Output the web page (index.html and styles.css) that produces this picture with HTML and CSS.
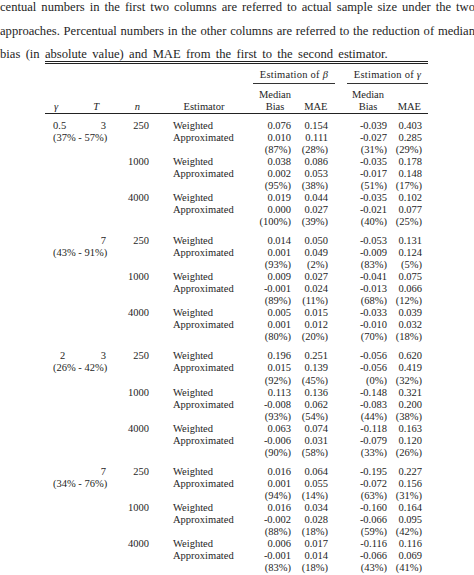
FILE: index.html
```html
<!DOCTYPE html>
<html>
<head>
<meta charset="utf-8">
<link rel="stylesheet" href="styles.css">
</head>
<body>
<div class="caption">
  <div class="line just">centual numbers in the first two columns are referred to actual sample size under the two</div>
  <div class="line just">approaches. Percentual numbers in the other columns are referred to the reduction of median</div>
  <div class="line last">bias (in absolute value) and MAE from the first to the second estimator.</div>
</div>

<div class="table">
  <div class="hrow1">
    <div class="span56"><span>Estimation of <i>β</i></span></div>
    <div class="span78"><span>Estimation of <i>γ</i></span></div>
  </div>
  <div class="hrow2">
    <div class="c1 hg"><i>γ</i></div>
    <div class="c2 ht"><i>T</i></div>
    <div class="c3 hn"><i>n</i></div>
    <div class="c4 he">Estimator</div>
    <div class="c5 hv5"><span class="stack">Median<br>Bias</span></div>
    <div class="c6 hv6">MAE</div>
    <div class="c7 hv7"><span class="stack">Median<br>Bias</span></div>
    <div class="c8 hv8">MAE</div>
  </div>

  <div class="tbody">
    <div class="group">
      <div class="row"><div class="c1 g">0.5</div><div class="c2 t">3</div><div class="c3 n">250</div><div class="c4 e">Weighted</div><div class="c5 v">0.076</div><div class="c6 v">0.154</div><div class="c7 v">-0.039</div><div class="c8 v">0.403</div></div>
      <div class="row"><div class="c12 g">(37% - 57%)</div><div class="c4 e">Approximated</div><div class="c5 v">0.010</div><div class="c6 v">0.111</div><div class="c7 v">-0.027</div><div class="c8 v">0.285</div></div>
      <div class="row"><div class="c5 v">(87%)</div><div class="c6 v">(28%)</div><div class="c7 v">(31%)</div><div class="c8 v">(29%)</div></div>
      <div class="row"><div class="c3 n">1000</div><div class="c4 e">Weighted</div><div class="c5 v">0.038</div><div class="c6 v">0.086</div><div class="c7 v">-0.035</div><div class="c8 v">0.178</div></div>
      <div class="row"><div class="c4 e">Approximated</div><div class="c5 v">0.002</div><div class="c6 v">0.053</div><div class="c7 v">-0.017</div><div class="c8 v">0.148</div></div>
      <div class="row"><div class="c5 v">(95%)</div><div class="c6 v">(38%)</div><div class="c7 v">(51%)</div><div class="c8 v">(17%)</div></div>
      <div class="row"><div class="c3 n">4000</div><div class="c4 e">Weighted</div><div class="c5 v">0.019</div><div class="c6 v">0.044</div><div class="c7 v">-0.035</div><div class="c8 v">0.102</div></div>
      <div class="row"><div class="c4 e">Approximated</div><div class="c5 v">0.000</div><div class="c6 v">0.027</div><div class="c7 v">-0.021</div><div class="c8 v">0.077</div></div>
      <div class="row"><div class="c5 v">(100%)</div><div class="c6 v">(39%)</div><div class="c7 v">(40%)</div><div class="c8 v">(25%)</div></div>
    </div>

    <div class="group">
      <div class="row"><div class="c2 t">7</div><div class="c3 n">250</div><div class="c4 e">Weighted</div><div class="c5 v">0.014</div><div class="c6 v">0.050</div><div class="c7 v">-0.053</div><div class="c8 v">0.131</div></div>
      <div class="row"><div class="c12 g">(43% - 91%)</div><div class="c4 e">Approximated</div><div class="c5 v">0.001</div><div class="c6 v">0.049</div><div class="c7 v">-0.009</div><div class="c8 v">0.124</div></div>
      <div class="row"><div class="c5 v">(93%)</div><div class="c6 v">(2%)</div><div class="c7 v">(83%)</div><div class="c8 v">(5%)</div></div>
      <div class="row"><div class="c3 n">1000</div><div class="c4 e">Weighted</div><div class="c5 v">0.009</div><div class="c6 v">0.027</div><div class="c7 v">-0.041</div><div class="c8 v">0.075</div></div>
      <div class="row"><div class="c4 e">Approximated</div><div class="c5 v">-0.001</div><div class="c6 v">0.024</div><div class="c7 v">-0.013</div><div class="c8 v">0.066</div></div>
      <div class="row"><div class="c5 v">(89%)</div><div class="c6 v">(11%)</div><div class="c7 v">(68%)</div><div class="c8 v">(12%)</div></div>
      <div class="row"><div class="c3 n">4000</div><div class="c4 e">Weighted</div><div class="c5 v">0.005</div><div class="c6 v">0.015</div><div class="c7 v">-0.033</div><div class="c8 v">0.039</div></div>
      <div class="row"><div class="c4 e">Approximated</div><div class="c5 v">0.001</div><div class="c6 v">0.012</div><div class="c7 v">-0.010</div><div class="c8 v">0.032</div></div>
      <div class="row"><div class="c5 v">(80%)</div><div class="c6 v">(20%)</div><div class="c7 v">(70%)</div><div class="c8 v">(18%)</div></div>
    </div>

    <div class="group">
      <div class="row"><div class="c1 g g2">2</div><div class="c2 t">3</div><div class="c3 n">250</div><div class="c4 e">Weighted</div><div class="c5 v">0.196</div><div class="c6 v">0.251</div><div class="c7 v">-0.056</div><div class="c8 v">0.620</div></div>
      <div class="row"><div class="c12 g">(26% - 42%)</div><div class="c4 e">Approximated</div><div class="c5 v">0.015</div><div class="c6 v">0.139</div><div class="c7 v">-0.056</div><div class="c8 v">0.419</div></div>
      <div class="row"><div class="c5 v">(92%)</div><div class="c6 v">(45%)</div><div class="c7 v">(0%)</div><div class="c8 v">(32%)</div></div>
      <div class="row"><div class="c3 n">1000</div><div class="c4 e">Weighted</div><div class="c5 v">0.113</div><div class="c6 v">0.136</div><div class="c7 v">-0.148</div><div class="c8 v">0.321</div></div>
      <div class="row"><div class="c4 e">Approximated</div><div class="c5 v">-0.008</div><div class="c6 v">0.062</div><div class="c7 v">-0.083</div><div class="c8 v">0.200</div></div>
      <div class="row"><div class="c5 v">(93%)</div><div class="c6 v">(54%)</div><div class="c7 v">(44%)</div><div class="c8 v">(38%)</div></div>
      <div class="row"><div class="c3 n">4000</div><div class="c4 e">Weighted</div><div class="c5 v">0.063</div><div class="c6 v">0.074</div><div class="c7 v">-0.118</div><div class="c8 v">0.163</div></div>
      <div class="row"><div class="c4 e">Approximated</div><div class="c5 v">-0.006</div><div class="c6 v">0.031</div><div class="c7 v">-0.079</div><div class="c8 v">0.120</div></div>
      <div class="row"><div class="c5 v">(90%)</div><div class="c6 v">(58%)</div><div class="c7 v">(33%)</div><div class="c8 v">(26%)</div></div>
    </div>

    <div class="group">
      <div class="row"><div class="c2 t">7</div><div class="c3 n">250</div><div class="c4 e">Weighted</div><div class="c5 v">0.016</div><div class="c6 v">0.064</div><div class="c7 v">-0.195</div><div class="c8 v">0.227</div></div>
      <div class="row"><div class="c12 g">(34% - 76%)</div><div class="c4 e">Approximated</div><div class="c5 v">0.001</div><div class="c6 v">0.055</div><div class="c7 v">-0.072</div><div class="c8 v">0.156</div></div>
      <div class="row"><div class="c5 v">(94%)</div><div class="c6 v">(14%)</div><div class="c7 v">(63%)</div><div class="c8 v">(31%)</div></div>
      <div class="row"><div class="c3 n">1000</div><div class="c4 e">Weighted</div><div class="c5 v">0.016</div><div class="c6 v">0.034</div><div class="c7 v">-0.160</div><div class="c8 v">0.164</div></div>
      <div class="row"><div class="c4 e">Approximated</div><div class="c5 v">-0.002</div><div class="c6 v">0.028</div><div class="c7 v">-0.066</div><div class="c8 v">0.095</div></div>
      <div class="row"><div class="c5 v">(88%)</div><div class="c6 v">(18%)</div><div class="c7 v">(59%)</div><div class="c8 v">(42%)</div></div>
      <div class="row"><div class="c3 n">4000</div><div class="c4 e">Weighted</div><div class="c5 v">0.006</div><div class="c6 v">0.017</div><div class="c7 v">-0.116</div><div class="c8 v">0.116</div></div>
      <div class="row"><div class="c4 e">Approximated</div><div class="c5 v">-0.001</div><div class="c6 v">0.014</div><div class="c7 v">-0.066</div><div class="c8 v">0.069</div></div>
      <div class="row"><div class="c5 v">(83%)</div><div class="c6 v">(18%)</div><div class="c7 v">(43%)</div><div class="c8 v">(41%)</div></div>
    </div>
  </div>
</div>
</body>
</html>
```

FILE: styles.css
```css
html, body {
  margin: 0;
  padding: 0;
  background: #ffffff;
  overflow: hidden;
}

body {
  font-family: "Liberation Serif", "Times New Roman", serif;
  color: #1e1e1e;
}

.caption {
  margin-top: -4.2px;
  width: 475px;
  font-size: 12.6px;
  line-height: 23.7px;
}

.line.just {
  text-align: justify;
  text-align-last: justify;
  word-spacing: -1.5px;
}

.line.last {
  white-space: nowrap;
  word-spacing: 2.2px;
}

.table {
  margin-top: -5.6px;
  margin-left: 45px;
  width: 383px;
  border-top: 3px double #222;
  padding-top: 4.5px;
  font-size: 10.5px;
  line-height: 12.05px;
}

.hrow1,
.hrow2,
.row {
  display: grid;
  grid-template-columns: 30px 37px 55px 80px 50px 37px 59px 35px;
}

.hrow1 .span56 {
  grid-column: 5 / 7;
  margin-left: 6px;
  margin-right: -1px;
  text-align: center;
  padding-bottom: 1.7px;
  border-bottom: 1px solid #333;
  letter-spacing: 0.25px;
}

.hrow1 .span78 {
  grid-column: 7 / 9;
  margin-left: 13px;
  text-align: center;
  padding-bottom: 1.7px;
  border-bottom: 1px solid #333;
  letter-spacing: 0.25px;
}

.hrow2 {
  margin-top: 4.95px;
  align-items: end;
  border-bottom: 1px solid #222;
}

.c1 { grid-column: 1; }
.c2 { grid-column: 2; }
.c3 { grid-column: 3; }
.c4 { grid-column: 4; }
.c5 { grid-column: 5; }
.c6 { grid-column: 6; }
.c7 { grid-column: 7; }
.c8 { grid-column: 8; }
.c12 { grid-column: 1 / 3; }

.hg { padding-left: 9px; }
.ht { text-align: right; padding-right: 13px; }
.hn { text-align: right; padding-right: 27px; }
.he { text-align: center; padding-right: 6px; }
.hv5 { text-align: right; padding-right: 6px; }
.hv6 { text-align: right; padding-right: 6.5px; }
.hv7 { text-align: right; padding-right: 9px; }
.hv8 { text-align: right; padding-right: 7px; }

.stack {
  display: inline-block;
  text-align: center;
}

.tbody {
  padding-top: 6.1px;
}

.group + .group {
  margin-top: 6.95px;
}

.row {
  height: 12.05px;
  white-space: nowrap;
}

.g { padding-left: 8px; }
.g2 { padding-left: 15px; }
.t { text-align: right; padding-right: 6px; }
.n { text-align: right; padding-right: 18px; }
.e { padding-left: 6px; }
.v { text-align: right; padding-right: 6px; }
```
